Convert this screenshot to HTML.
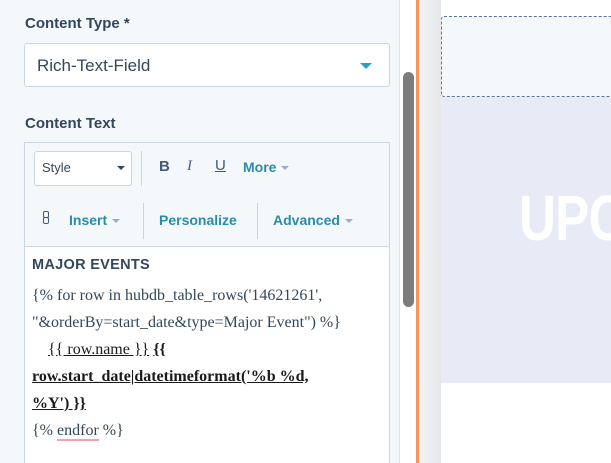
<!DOCTYPE html>
<html style="width:611px;height:463px;overflow:hidden"><head><style>
*{margin:0;padding:0;box-sizing:border-box}
body{width:611px;height:463px;overflow:hidden;position:relative;background:#fff;font-family:"Liberation Sans",sans-serif;color:#33475b}
.abs{position:absolute}
.lbl{font-weight:bold;font-size:15px;color:#33475b}
.tb{color:#2a8ca8;font-weight:bold;font-size:14px}
.caret{display:inline-block;width:0;height:0;border-left:4px solid transparent;border-right:4px solid transparent;border-top:4px solid #99afc4;vertical-align:middle;margin-left:5px}
.ser{font-family:"Liberation Serif",serif;font-size:16px;color:#33475b}
</style></head><body>
<div class="abs" style="left:0;top:0;width:400px;height:463px;background:#f5f8fa;border-right:1px solid #dfe3eb"></div>
<div class="abs lbl" style="left:25px;top:15px">Content Type *</div>
<div class="abs" style="left:24px;top:43px;width:366px;height:44px;background:#fff;border:1px solid #cbd6e2;border-radius:3px"></div>
<div class="abs" style="left:37px;top:56px;font-size:17px;color:#33475b">Rich-Text-Field</div>
<div class="abs" style="left:360px;top:63px;border-left:6px solid transparent;border-right:6px solid transparent;border-top:6px solid #2a9fc0"></div>
<div class="abs lbl" style="left:25px;top:115px">Content Text</div>
<div class="abs" style="left:24px;top:142px;width:366px;height:330px;background:#fff;border:1px solid #cbd6e2"></div>
<div class="abs" style="left:25px;top:143px;width:364px;height:104px;background:#f5f8fa;border-bottom:1px solid #cbd6e2"></div>
<div class="abs" style="left:34px;top:151px;width:98px;height:35px;background:#fff;border:1px solid #cbd6e2;border-radius:3px"></div>
<div class="abs" style="left:42px;top:160px;font-size:13px;color:#33475b">Style</div>
<div class="abs" style="left:117px;top:166px;border-left:4px solid transparent;border-right:4px solid transparent;border-top:4px solid #33475b"></div>
<div class="abs" style="left:141px;top:151px;width:1px;height:35px;background:#cbd6e2"></div>
<div class="abs" style="left:159px;top:158px;font-weight:bold;font-size:15px;color:#425b76">B</div>
<div class="abs" style="left:187px;top:158px;font-style:italic;font-size:15px;color:#425b76;font-family:'Liberation Serif',serif">I</div>
<div class="abs" style="left:215px;top:157px;text-decoration:underline;font-size:15px;color:#425b76">U</div>
<div class="abs tb" style="left:243px;top:159px">More<span class="caret"></span></div>
<div class="abs" style="left:43px;top:211px;width:6px;height:7px;border:1.5px solid #425b76;border-radius:2px"></div>
<div class="abs" style="left:43px;top:217px;width:6px;height:7px;border:1.5px solid #425b76;border-radius:2px"></div>
<div class="abs tb" style="left:69px;top:212px">Insert<span class="caret"></span></div>
<div class="abs" style="left:143px;top:203px;width:1px;height:36px;background:#cbd6e2"></div>
<div class="abs tb" style="left:159px;top:212px">Personalize</div>
<div class="abs" style="left:257px;top:203px;width:1px;height:36px;background:#cbd6e2"></div>
<div class="abs tb" style="left:273px;top:212px">Advanced<span class="caret"></span></div>
<div class="abs" style="left:32px;top:257px;font-weight:bold;font-size:14.5px;color:#33475b;letter-spacing:.3px">MAJOR EVENTS</div>
<div class="abs ser" style="left:32px;top:282px;line-height:27px;width:360px">
{% for row in hubdb_table_rows('14621261',<br>"&amp;orderBy=start_date&amp;type=Major Event") %}<br>
<span style="color:#1a1a1a">&nbsp;&nbsp;&nbsp;&nbsp;<u>{{ row.name }}</u> <b><u>{{</u></b><br><b><u>row.start_date|datetimeformat('%b %d,</u></b><br><b><u>%Y') }}</u></b></span></div>
<div class="abs ser" style="left:32px;top:422px">{% <span style="border-bottom:2px solid #f2a1b0">endfor</span> %}</div>
<div class="abs" style="left:403px;top:72px;width:11px;height:235px;background:#7c7c7c;border-radius:6px"></div>
<div class="abs" style="left:416px;top:0;width:3px;height:463px;background:#f5945c"></div>
<div class="abs" style="left:419px;top:0;width:22px;height:463px;background:linear-gradient(90deg,#f3f4f6,#e6e7ea)"></div>
<div class="abs" style="left:441px;top:16px;width:180px;height:81px;background:#f5f8fa;border:1px dashed #5b7593;border-right:none;border-radius:3px 0 0 3px"></div>
<div class="abs" style="left:441px;top:97px;width:170px;height:286px;background:#e8eaf6;overflow:hidden">
<div class="abs" style="left:78px;top:84px;font-size:64px;font-weight:bold;color:#fff;white-space:nowrap;transform:scaleX(0.8);transform-origin:0 0;letter-spacing:-1px">UPCOMING</div></div>
</body></html>
